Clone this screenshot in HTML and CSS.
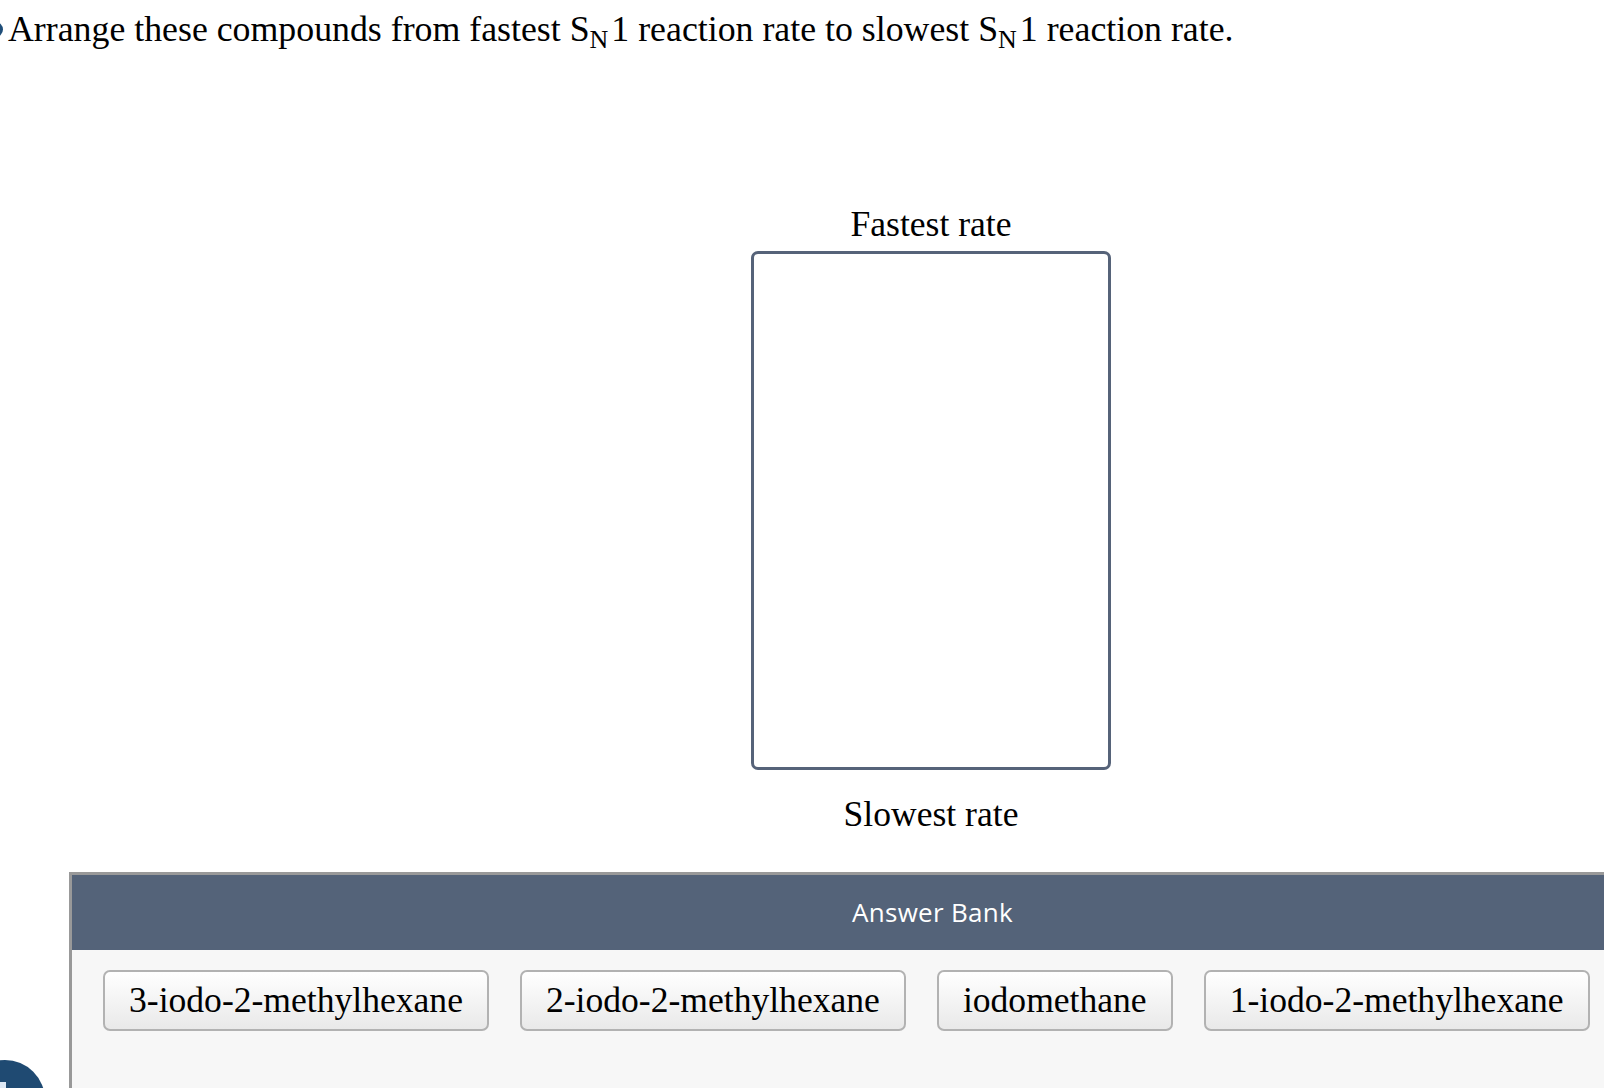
FILE: index.html
```html
<!DOCTYPE html>
<html>
<head>
<meta charset="utf-8">
<link rel="stylesheet" href="styles.css">
</head>
<body>
<div class="page">
  <div class="dot-top"></div>
  <p class="question">Arrange these compounds from fastest S<sub>N</sub>1 reaction rate to slowest S<sub>N</sub>1 reaction rate.</p>
  <div class="activity">
    <div class="ranking">
      <div class="rank-label top">Fastest rate</div>
      <div class="dropzone"></div>
      <div class="rank-label bottom">Slowest rate</div>
    </div>
    <div class="bank">
      <div class="bank-header">Answer Bank</div>
      <div class="bank-body">
        <div class="chip">3-iodo-2-methylhexane</div>
        <div class="chip">2-iodo-2-methylhexane</div>
        <div class="chip">iodomethane</div>
        <div class="chip">1-iodo-2-methylhexane</div>
      </div>
    </div>
  </div>
  <div class="help-badge"><span class="help-square"></span></div>
</div>
</body>
</html>
```
FILE: styles.css
```css
html, body {
  margin: 0;
  padding: 0;
  background: #ffffff;
  overflow: hidden;
}
body {
  width: 1604px;
  height: 1088px;
  font-family: "Liberation Serif", "Times New Roman", serif;
  color: #000;
}
.page {
  position: relative;
  width: 1604px;
  height: 1088px;
  overflow: hidden;
}
.dot-top {
  position: absolute;
  left: -12px;
  top: 22px;
  width: 15px;
  height: 15px;
  border-radius: 50%;
  background: #1f4e79;
}
.question {
  margin: 0;
  padding: 9px 0 0 8px;
  font-size: 35.8px;
  line-height: 40px;
  white-space: nowrap;
}
.question sub {
  font-size: 26px;
  vertical-align: -7px;
  line-height: 0;
  margin-right: 3px;
}
.activity {
  margin-left: 69px;
  width: 1724px;
}
.ranking {
  display: flex;
  flex-direction: column;
  align-items: center;
  padding-top: 155px;
}
.rank-label {
  font-size: 35.6px;
  line-height: 40px;
  text-align: center;
}
.rank-label.top {
  margin-bottom: 7px;
}
.rank-label.bottom {
  margin-top: 24px;
}
.dropzone {
  box-sizing: border-box;
  width: 360px;
  height: 519px;
  border: 3px solid #566379;
  border-radius: 7px;
  background: #fff;
}
.bank {
  margin-top: 38px;
  border-top: 3px solid #999999;
  border-left: 3px solid #999999;
  background: #f7f7f7;
  height: 240px;
}
.bank-header {
  height: 75px;
  background: #546379;
  color: #ffffff;
  font-family: "Open Sans", "Noto Sans", sans-serif;
  font-size: 26px;
  line-height: 75px;
  text-align: center;
  letter-spacing: 0.3px;
}
.bank-body {
  display: flex;
  flex-wrap: wrap;
  gap: 30px 31px;
  padding: 20px 31px;
}
.chip {
  box-sizing: border-box;
  height: 61px;
  padding: 0 24px;
  border: 2px solid #b2b2b2;
  border-radius: 7px;
  background: linear-gradient(#ffffff, #e9e9e9);
  font-size: 35.6px;
  line-height: 57px;
  white-space: nowrap;
}
.help-badge {
  position: absolute;
  left: -35px;
  top: 1060px;
  width: 80px;
  height: 80px;
  border-radius: 50%;
  background: #1f4a72;
}
.help-square {
  position: absolute;
  left: 31px;
  top: 22px;
  width: 10px;
  height: 10px;
  background: #dde8f4;
}
```
